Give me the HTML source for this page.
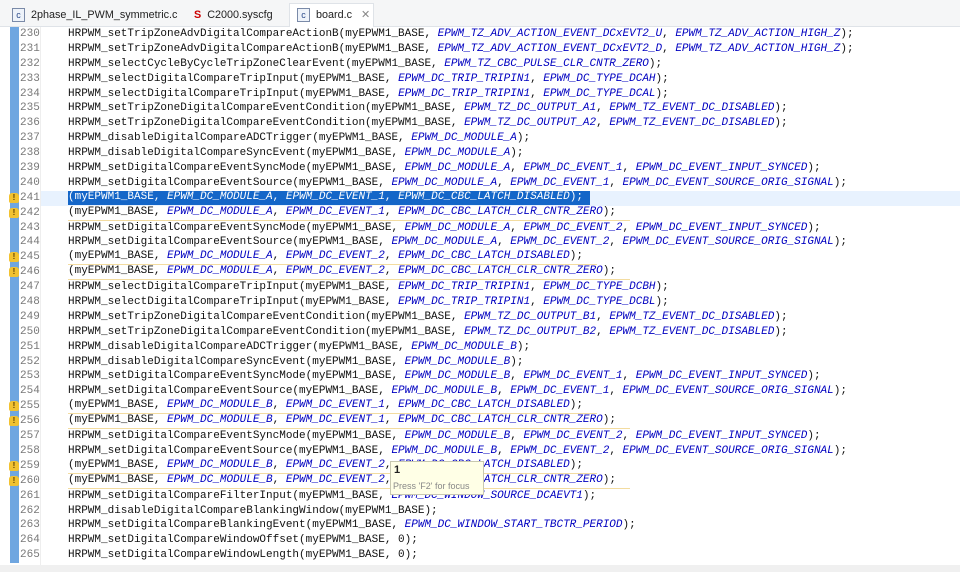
<!DOCTYPE html>
<html><head><meta charset="utf-8"><style>
body{margin:0;width:960px;height:572px;overflow:hidden;background:#fff;position:relative;font-family:"Liberation Mono",monospace}
.tabs{position:absolute;left:0;top:0;width:960px;height:26px;background:#f5f6f7;border-bottom:1px solid #dfe3e8;font-family:"Liberation Sans",sans-serif;font-size:10.8px;color:#222}
.tab{position:absolute;top:4px;height:22px;line-height:22px;white-space:nowrap}
.tab.act{background:#fff;border:1px solid #dfe3e8;border-bottom:none;top:3px;height:23px}
.ic{display:inline-block;width:11px;height:12px;border:1px solid #7a8aa8;background:#eef3fa;font-size:9px;line-height:12px;text-align:center;color:#2a4a8a;vertical-align:middle;margin-right:6px}
.bar{position:absolute;left:10px;top:27px;width:9px;height:536px;background:#6fa6e0}
.gut{position:absolute;left:40px;top:27px;width:1px;height:538px;background:#eee}
.code{position:absolute;left:0;top:27px;font-size:11px}
.l{position:relative;height:14.9px;line-height:14.9px;white-space:pre}
.n{position:absolute;left:20px;color:#787878}
.t{position:absolute;left:68px;color:#111}
.c{color:#0000c0;font-style:italic}
.w .t{border-bottom:1px solid #f3dca0;padding-right:14px;line-height:13.9px}
.w::before{content:"!";position:absolute;left:9px;top:2px;width:10px;height:10px;background:#f2c230;border-radius:3px 3px 2px 2px;font-size:8px;line-height:10px;text-align:center;color:#5a3d00;font-family:"Liberation Sans";font-weight:bold}
.sel{position:absolute;left:41px;width:919px;top:0;height:14.9px;background:#e8f2fe}
.sel2 .t{background:#1466c8;color:#fff;border-bottom:none;padding-right:0}
.sel2 .c{color:#fff}
.bot{position:absolute;left:0;top:565px;width:960px;height:7px;background:#f0f0f0}
.tip{position:absolute;left:390px;top:461px;width:92px;height:32px;background:#ffffe6;border:1px solid #c8c8b0;font-family:"Liberation Sans",sans-serif}
</style></head><body>
<div class="tabs">
<div class="tab" style="left:12px"><span class="ic">c</span>2phase_IL_PWM_symmetric.c</div>
<div class="tab" style="left:194px"><span style="color:#c00;font-weight:bold;margin-right:6px">S</span>C2000.syscfg</div>
<div class="tab act" style="left:289px;width:76px;padding-left:7px"><span class="ic">c</span>board.c <span style="color:#888;margin-left:6px">✕</span></div>
</div>
<div class="bar"></div><div class="gut"></div>
<div class="code">
<div class="l"><span class="n">230</span><span class="t">HRPWM_setTripZoneAdvDigitalCompareActionB(myEPWM1_BASE, <span class="c">EPWM_TZ_ADV_ACTION_EVENT_DCxEVT2_U</span>, <span class="c">EPWM_TZ_ADV_ACTION_HIGH_Z</span>);</span></div>
<div class="l"><span class="n">231</span><span class="t">HRPWM_setTripZoneAdvDigitalCompareActionB(myEPWM1_BASE, <span class="c">EPWM_TZ_ADV_ACTION_EVENT_DCxEVT2_D</span>, <span class="c">EPWM_TZ_ADV_ACTION_HIGH_Z</span>);</span></div>
<div class="l"><span class="n">232</span><span class="t">HRPWM_selectCycleByCycleTripZoneClearEvent(myEPWM1_BASE, <span class="c">EPWM_TZ_CBC_PULSE_CLR_CNTR_ZERO</span>);</span></div>
<div class="l"><span class="n">233</span><span class="t">HRPWM_selectDigitalCompareTripInput(myEPWM1_BASE, <span class="c">EPWM_DC_TRIP_TRIPIN1</span>, <span class="c">EPWM_DC_TYPE_DCAH</span>);</span></div>
<div class="l"><span class="n">234</span><span class="t">HRPWM_selectDigitalCompareTripInput(myEPWM1_BASE, <span class="c">EPWM_DC_TRIP_TRIPIN1</span>, <span class="c">EPWM_DC_TYPE_DCAL</span>);</span></div>
<div class="l"><span class="n">235</span><span class="t">HRPWM_setTripZoneDigitalCompareEventCondition(myEPWM1_BASE, <span class="c">EPWM_TZ_DC_OUTPUT_A1</span>, <span class="c">EPWM_TZ_EVENT_DC_DISABLED</span>);</span></div>
<div class="l"><span class="n">236</span><span class="t">HRPWM_setTripZoneDigitalCompareEventCondition(myEPWM1_BASE, <span class="c">EPWM_TZ_DC_OUTPUT_A2</span>, <span class="c">EPWM_TZ_EVENT_DC_DISABLED</span>);</span></div>
<div class="l"><span class="n">237</span><span class="t">HRPWM_disableDigitalCompareADCTrigger(myEPWM1_BASE, <span class="c">EPWM_DC_MODULE_A</span>);</span></div>
<div class="l"><span class="n">238</span><span class="t">HRPWM_disableDigitalCompareSyncEvent(myEPWM1_BASE, <span class="c">EPWM_DC_MODULE_A</span>);</span></div>
<div class="l"><span class="n">239</span><span class="t">HRPWM_setDigitalCompareEventSyncMode(myEPWM1_BASE, <span class="c">EPWM_DC_MODULE_A</span>, <span class="c">EPWM_DC_EVENT_1</span>, <span class="c">EPWM_DC_EVENT_INPUT_SYNCED</span>);</span></div>
<div class="l"><span class="n">240</span><span class="t">HRPWM_setDigitalCompareEventSource(myEPWM1_BASE, <span class="c">EPWM_DC_MODULE_A</span>, <span class="c">EPWM_DC_EVENT_1</span>, <span class="c">EPWM_DC_EVENT_SOURCE_ORIG_SIGNAL</span>);</span></div>
<div class="l w sel2"><span class="sel"></span><span class="n">241</span><span class="t">(myEPWM1_BASE, <span class="c">EPWM_DC_MODULE_A</span>, <span class="c">EPWM_DC_EVENT_1</span>, <span class="c">EPWM_DC_CBC_LATCH_DISABLED</span>); </span></div>
<div class="l w"><span class="n">242</span><span class="t">(myEPWM1_BASE, <span class="c">EPWM_DC_MODULE_A</span>, <span class="c">EPWM_DC_EVENT_1</span>, <span class="c">EPWM_DC_CBC_LATCH_CLR_CNTR_ZERO</span>);</span></div>
<div class="l"><span class="n">243</span><span class="t">HRPWM_setDigitalCompareEventSyncMode(myEPWM1_BASE, <span class="c">EPWM_DC_MODULE_A</span>, <span class="c">EPWM_DC_EVENT_2</span>, <span class="c">EPWM_DC_EVENT_INPUT_SYNCED</span>);</span></div>
<div class="l"><span class="n">244</span><span class="t">HRPWM_setDigitalCompareEventSource(myEPWM1_BASE, <span class="c">EPWM_DC_MODULE_A</span>, <span class="c">EPWM_DC_EVENT_2</span>, <span class="c">EPWM_DC_EVENT_SOURCE_ORIG_SIGNAL</span>);</span></div>
<div class="l w"><span class="n">245</span><span class="t">(myEPWM1_BASE, <span class="c">EPWM_DC_MODULE_A</span>, <span class="c">EPWM_DC_EVENT_2</span>, <span class="c">EPWM_DC_CBC_LATCH_DISABLED</span>);</span></div>
<div class="l w"><span class="n">246</span><span class="t">(myEPWM1_BASE, <span class="c">EPWM_DC_MODULE_A</span>, <span class="c">EPWM_DC_EVENT_2</span>, <span class="c">EPWM_DC_CBC_LATCH_CLR_CNTR_ZERO</span>);</span></div>
<div class="l"><span class="n">247</span><span class="t">HRPWM_selectDigitalCompareTripInput(myEPWM1_BASE, <span class="c">EPWM_DC_TRIP_TRIPIN1</span>, <span class="c">EPWM_DC_TYPE_DCBH</span>);</span></div>
<div class="l"><span class="n">248</span><span class="t">HRPWM_selectDigitalCompareTripInput(myEPWM1_BASE, <span class="c">EPWM_DC_TRIP_TRIPIN1</span>, <span class="c">EPWM_DC_TYPE_DCBL</span>);</span></div>
<div class="l"><span class="n">249</span><span class="t">HRPWM_setTripZoneDigitalCompareEventCondition(myEPWM1_BASE, <span class="c">EPWM_TZ_DC_OUTPUT_B1</span>, <span class="c">EPWM_TZ_EVENT_DC_DISABLED</span>);</span></div>
<div class="l"><span class="n">250</span><span class="t">HRPWM_setTripZoneDigitalCompareEventCondition(myEPWM1_BASE, <span class="c">EPWM_TZ_DC_OUTPUT_B2</span>, <span class="c">EPWM_TZ_EVENT_DC_DISABLED</span>);</span></div>
<div class="l"><span class="n">251</span><span class="t">HRPWM_disableDigitalCompareADCTrigger(myEPWM1_BASE, <span class="c">EPWM_DC_MODULE_B</span>);</span></div>
<div class="l"><span class="n">252</span><span class="t">HRPWM_disableDigitalCompareSyncEvent(myEPWM1_BASE, <span class="c">EPWM_DC_MODULE_B</span>);</span></div>
<div class="l"><span class="n">253</span><span class="t">HRPWM_setDigitalCompareEventSyncMode(myEPWM1_BASE, <span class="c">EPWM_DC_MODULE_B</span>, <span class="c">EPWM_DC_EVENT_1</span>, <span class="c">EPWM_DC_EVENT_INPUT_SYNCED</span>);</span></div>
<div class="l"><span class="n">254</span><span class="t">HRPWM_setDigitalCompareEventSource(myEPWM1_BASE, <span class="c">EPWM_DC_MODULE_B</span>, <span class="c">EPWM_DC_EVENT_1</span>, <span class="c">EPWM_DC_EVENT_SOURCE_ORIG_SIGNAL</span>);</span></div>
<div class="l w"><span class="n">255</span><span class="t">(myEPWM1_BASE, <span class="c">EPWM_DC_MODULE_B</span>, <span class="c">EPWM_DC_EVENT_1</span>, <span class="c">EPWM_DC_CBC_LATCH_DISABLED</span>);</span></div>
<div class="l w"><span class="n">256</span><span class="t">(myEPWM1_BASE, <span class="c">EPWM_DC_MODULE_B</span>, <span class="c">EPWM_DC_EVENT_1</span>, <span class="c">EPWM_DC_CBC_LATCH_CLR_CNTR_ZERO</span>);</span></div>
<div class="l"><span class="n">257</span><span class="t">HRPWM_setDigitalCompareEventSyncMode(myEPWM1_BASE, <span class="c">EPWM_DC_MODULE_B</span>, <span class="c">EPWM_DC_EVENT_2</span>, <span class="c">EPWM_DC_EVENT_INPUT_SYNCED</span>);</span></div>
<div class="l"><span class="n">258</span><span class="t">HRPWM_setDigitalCompareEventSource(myEPWM1_BASE, <span class="c">EPWM_DC_MODULE_B</span>, <span class="c">EPWM_DC_EVENT_2</span>, <span class="c">EPWM_DC_EVENT_SOURCE_ORIG_SIGNAL</span>);</span></div>
<div class="l w"><span class="n">259</span><span class="t">(myEPWM1_BASE, <span class="c">EPWM_DC_MODULE_B</span>, <span class="c">EPWM_DC_EVENT_2</span>, <span class="c">EPWM_DC_CBC_LATCH_DISABLED</span>);</span></div>
<div class="l w"><span class="n">260</span><span class="t">(myEPWM1_BASE, <span class="c">EPWM_DC_MODULE_B</span>, <span class="c">EPWM_DC_EVENT_2</span>, <span class="c">EPWM_DC_CBC_LATCH_CLR_CNTR_ZERO</span>);</span></div>
<div class="l"><span class="n">261</span><span class="t">HRPWM_setDigitalCompareFilterInput(myEPWM1_BASE, <span class="c">EPWM_DC_WINDOW_SOURCE_DCAEVT1</span>);</span></div>
<div class="l"><span class="n">262</span><span class="t">HRPWM_disableDigitalCompareBlankingWindow(myEPWM1_BASE);</span></div>
<div class="l"><span class="n">263</span><span class="t">HRPWM_setDigitalCompareBlankingEvent(myEPWM1_BASE, <span class="c">EPWM_DC_WINDOW_START_TBCTR_PERIOD</span>);</span></div>
<div class="l"><span class="n">264</span><span class="t">HRPWM_setDigitalCompareWindowOffset(myEPWM1_BASE, 0);</span></div>
<div class="l"><span class="n">265</span><span class="t">HRPWM_setDigitalCompareWindowLength(myEPWM1_BASE, 0);</span></div>
</div>
<div class="tip"><div style="position:absolute;left:3px;top:2px;font-size:11px;font-weight:bold;color:#222">1</div><div style="position:absolute;left:2px;top:19px;font-size:9px;color:#888;white-space:nowrap">Press 'F2' for focus</div></div>
<div class="bot"></div>
</body></html>
